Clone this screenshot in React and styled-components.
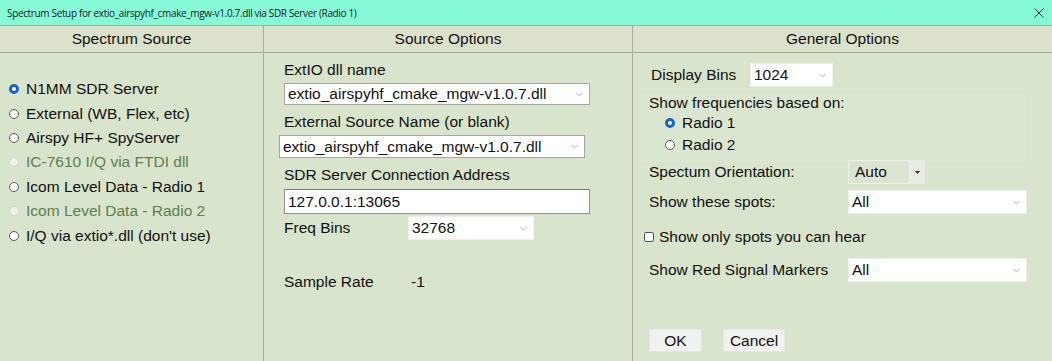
import React from "react";
import styled, { createGlobalStyle, css } from "styled-components";

const Global = createGlobalStyle`
  html, body { margin: 0; padding: 0; }
  body {
    width: 1052px; height: 361px; overflow: hidden;
    background: #d8e4cb;
    font-family: "Liberation Sans", Arial, sans-serif;
    color: #111;
  }
`;

const Window = styled.div`
  width: 1052px; height: 361px;
  display: flex; flex-direction: column;
  background: #d8e4cb;
`;

const TitleBar = styled.div`
  height: 25px; flex: none;
  background: #86f9d6;
  border-bottom: 1px solid #9cb8ac;
  display: flex; align-items: center; justify-content: space-between;
  padding: 0 6px 0 7px;
  font-family: "Open Sans", "Noto Sans", sans-serif;
  font-size: 10px; letter-spacing: -0.35px; color: #1c1c1c;
`;

const CloseX = styled.svg`
  width: 10px; height: 10px; margin-right: 2px;
`;

const Columns = styled.div`
  flex: 1;
  display: grid;
  grid-template-columns: 264px 369px 1fr;
`;

const Column = styled.div`
  display: flex; flex-direction: column;
  border-right: ${p => (p.$last ? "none" : "1px solid #a9ae9e")};
`;

const Header = styled.div`
  height: 26px; flex: none;
  background: #dce1cb;
  border-bottom: 1px solid #a3a898;
  display: flex; align-items: center; justify-content: center;
  font-size: 15.5px;
`;

const Body = styled.div`
  flex: 1;
  display: flex; flex-direction: column;
  padding: ${p => p.$pad};
`;

const RadioList = styled.div`
  display: flex; flex-direction: column;
  padding-top: ${p => p.$top || 0}px;
  padding-left: ${p => p.$left || 0}px;
`;

const RadioRow = styled.div`
  display: flex; align-items: center;
  height: ${p => p.$h || 24.4}px;
  font-size: 15.5px;
  color: ${p => (p.$disabled ? "#5f7f4f" : "#111")};
`;

const RadioDot = styled.span`
  width: 10px; height: 10px; box-sizing: border-box;
  border-radius: 50%;
  background: #fff;
  border: 1px solid #5a5a5a;
  margin-right: 7px; flex: none;
  ${p => p.$checked && css`
    border: 3px solid #1565c8;
  `}
  ${p => p.$disabled && css`
    border: 1px solid #cdd6c6;
    background: #eef2ea;
  `}
`;

const Label = styled.div`
  font-size: 15.5px;
  line-height: 18px;
  margin-top: ${p => p.$mt || 0}px;
  margin-left: ${p => p.$ml || 0}px;
`;

const Select = styled.div`
  box-sizing: border-box;
  width: ${p => p.$w}px; height: ${p => p.$h || 24}px;
  margin-top: ${p => p.$mt || 0}px;
  margin-left: ${p => p.$ml || 0}px;
  background: #fff;
  border: ${p => (p.$bordered ? "1px solid #a6a6a6" : "1px solid #eef1ea")};
  display: flex; align-items: center; justify-content: space-between;
  padding: 0 6px 0 3px;
  font-size: 15.5px;
  flex: none;
`;

const Chevron = () => (
  <svg width="7" height="5" viewBox="0 0 7 5">
    <path d="M0.5 1 L3.5 4 L6.5 1" fill="none" stroke="#a8a8a8" strokeWidth="0.9" />
  </svg>
);

const TextInput = styled.div`
  box-sizing: border-box;
  width: 306px; height: 25px;
  margin-top: ${p => p.$mt || 0}px;
  background: #fff;
  border: 1px solid #8f8f8f;
  border-top-color: #7a7a7a;
  display: flex; align-items: center;
  padding-left: 3px;
  font-size: 15.5px;
`;

const Row = styled.div`
  display: flex; align-items: center;
  height: ${p => p.$h || 24}px;
  margin-top: ${p => p.$mt || 0}px;
  font-size: 15.5px;
`;

const RowLabel = styled.span`
  width: ${p => p.$w}px; flex: none;
  padding-left: ${p => p.$pl || 0}px;
  box-sizing: border-box;
`;

const GroupBox = styled.div`
  margin-top: 7px;
  margin-left: -9px;
  width: 386px;
  padding: 0 0 6px 9px;
  background: #dbe6d0;
  box-sizing: border-box;
`;

const Combo = styled.div`
  box-sizing: border-box;
  width: 77px; height: 24px;
  display: flex;
  font-size: 15.5px;
`;

const ComboText = styled.div`
  flex: 1;
  background: #dbe4d2;
  border: 1px solid #eef2ea;
  display: flex; align-items: center; padding-left: 6px;
`;

const ComboBtn = styled.div`
  width: 15px;
  background: #e9ece6;
  display: flex; align-items: center; justify-content: center;
`;

const CheckRow = styled.div`
  display: flex; align-items: center;
  height: 22px;
  margin-top: ${p => p.$mt}px;
  margin-left: -5px;
  font-size: 15.5px;
`;

const CheckBox = styled.span`
  width: 10px; height: 10px; box-sizing: border-box;
  border: 1px solid #555; border-radius: 2px;
  background: #fff; margin-right: 5px;
`;

const Buttons = styled.div`
  display: flex; gap: 21px;
  margin-top: auto;
  margin-bottom: 9px;
`;

const Button = styled.div`
  box-sizing: border-box;
  width: ${p => p.$w}px; height: 23px;
  background: #f1f2ef;
  border: 1px solid #e4e6e0;
  display: flex; align-items: center; justify-content: center;
  font-size: 15.5px;
`;

const sources = [
  { label: "N1MM SDR Server", checked: true },
  { label: "External (WB, Flex, etc)" },
  { label: "Airspy HF+ SpyServer" },
  { label: "IC-7610 I/Q via FTDI dll", disabled: true },
  { label: "Icom Level Data - Radio 1" },
  { label: "Icom Level Data - Radio 2", disabled: true },
  { label: "I/Q via extio*.dll (don't use)" },
];

export default function App() {
  return (
    <>
      <Global />
      <Window>
        <TitleBar>
          <span>Spectrum Setup for extio_airspyhf_cmake_mgw-v1.0.7.dll via SDR Server (Radio 1)</span>
          <CloseX viewBox="0 0 10 10">
            <path d="M0.5 0.5 L9.5 9.5 M9.5 0.5 L0.5 9.5" stroke="#333" strokeWidth="1" />
          </CloseX>
        </TitleBar>
        <Columns>
          <Column>
            <Header>Spectrum Source</Header>
            <Body $pad="24px 0 0 9px">
              <RadioList>
                {sources.map(s => (
                  <RadioRow key={s.label} $disabled={s.disabled}>
                    <RadioDot $checked={s.checked} $disabled={s.disabled} />
                    {s.label}
                  </RadioRow>
                ))}
              </RadioList>
            </Body>
          </Column>
          <Column>
            <Header>Source Options</Header>
            <Body $pad="0 0 0 20px">
              <Label $mt={8}>ExtIO dll name</Label>
              <Select $w={306} $h={22} $mt={4} $bordered>
                extio_airspyhf_cmake_mgw-v1.0.7.dll <Chevron />
              </Select>
              <Label $mt={8}>External Source Name (or blank)</Label>
              <Select $w={306} $h={23} $mt={4} $ml={-5} $bordered>
                extio_airspyhf_cmake_mgw-v1.0.7.dll <Chevron />
              </Select>
              <Label $mt={8}>SDR Server Connection Address</Label>
              <TextInput $mt={5}>127.0.0.1:13065</TextInput>
              <Row $mt={2} $h={24}>
                <RowLabel $w={124}>Freq Bins</RowLabel>
                <Select $w={126}>32768 <Chevron /></Select>
              </Row>
              <Row $mt={30}>
                <RowLabel $w={127}>Sample Rate</RowLabel>
                <span>-1</span>
              </Row>
            </Body>
          </Column>
          <Column $last>
            <Header>General Options</Header>
            <Body $pad="0 0 0 16px">
              <Row $mt={10} $h={24}>
                <RowLabel $w={101} $pl={2}>Display Bins</RowLabel>
                <Select $w={83}>1024 <Chevron /></Select>
              </Row>
              <GroupBox>
                <Label>Show frequencies based on:</Label>
                <RadioList $left={16}>
                  <RadioRow $h={22}>
                    <RadioDot $checked />
                    Radio 1
                  </RadioRow>
                  <RadioRow $h={22}>
                    <RadioDot />
                    Radio 2
                  </RadioRow>
                </RadioList>
              </GroupBox>
              <Row $mt={-2} $h={24}>
                <RowLabel $w={199}>Spectum Orientation:</RowLabel>
                <Combo>
                  <ComboText>Auto</ComboText>
                  <ComboBtn>
                    <svg width="5" height="3" viewBox="0 0 5 3"><path d="M0 0 L5 0 L2.5 3 Z" fill="#333" /></svg>
                  </ComboBtn>
                </Combo>
              </Row>
              <Row $mt={6} $h={24}>
                <RowLabel $w={199}>Show these spots:</RowLabel>
                <Select $w={179}>All <Chevron /></Select>
              </Row>
              <CheckRow $mt={12}>
                <CheckBox />
                Show only spots you can hear
              </CheckRow>
              <Row $mt={10} $h={24}>
                <RowLabel $w={199}>Show Red Signal Markers</RowLabel>
                <Select $w={179}>All <Chevron /></Select>
              </Row>
              <Buttons>
                <Button $w={53}>OK</Button>
                <Button $w={62}>Cancel</Button>
              </Buttons>
            </Body>
          </Column>
        </Columns>
      </Window>
    </>
  );
}
